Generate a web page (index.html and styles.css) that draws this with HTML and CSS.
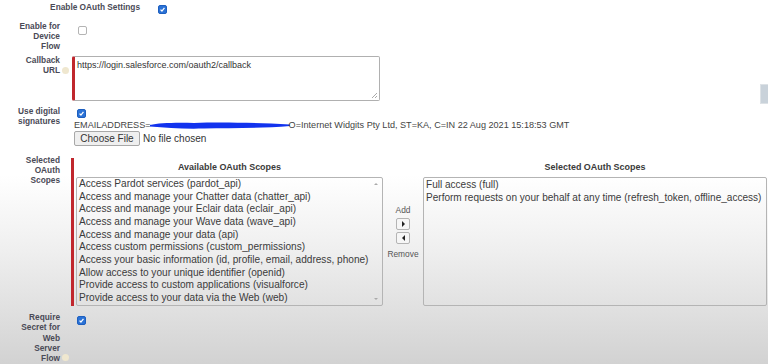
FILE: index.html
```html
<!DOCTYPE html>
<html>
<head>
<meta charset="utf-8">
<link rel="stylesheet" href="styles.css">
</head>
<body>
<div class="page">
  <div class="top-row">
    <div class="top-label">Enable OAuth Settings</div>
    <span class="cb on top-cb"><svg viewBox="0 0 10 10"><path d="M2.2 5.2 L4.2 7.2 L7.8 2.8" /></svg></span>
  </div>

  <div class="row row-device">
    <div class="lbl">Enable for<br>Device<br>Flow</div>
    <div class="help"></div>
    <div class="val"><span class="cb cb-device"></span></div>
  </div>

  <div class="row row-callback">
    <div class="lbl">Callback<br>URL</div>
    <div class="help"><span class="help-ic ic-callback"></span></div>
    <div class="val">
      <div class="url-box">https://login.salesforce.com/oauth2/callback<span class="grip"></span></div>
    </div>
  </div>

  <div class="row row-sig">
    <div class="lbl">Use digital<br>signatures</div>
    <div class="help"></div>
    <div class="val sig-val">
      <span class="cb on cb-sig"><svg viewBox="0 0 10 10"><path d="M2.2 5.2 L4.2 7.2 L7.8 2.8" /></svg></span>
      <div class="cert">EMAILADDRESS=<svg class="scribble" viewBox="0 0 142 10" width="142" height="10"><path d="M1 5 C10 3 25 2.5 45 3 C70 2 100 2.5 141 4.5 L141 6 C110 8.5 80 8 55 8.5 C35 9 18 8 1 6.5 Z" /></svg>O=Internet Widgits Pty Ltd, ST=KA, C=IN 22 Aug 2021 15:18:53 GMT</div>
      <div class="file-row"><span class="file-btn">Choose File</span><span class="file-none">No file chosen</span></div>
    </div>
  </div>

  <div class="row row-scopes">
    <div class="lbl">Selected<br>OAuth<br>Scopes</div>
    <div class="help"></div>
    <div class="val scopes-val">
      <div class="scope-col avail-col">
        <div class="scope-head">Available OAuth Scopes</div>
        <div class="scope-box avail-box">
          <div>Access Pardot services (pardot_api)</div>
          <div>Access and manage your Chatter data (chatter_api)</div>
          <div>Access and manage your Eclair data (eclair_api)</div>
          <div>Access and manage your Wave data (wave_api)</div>
          <div>Access and manage your data (api)</div>
          <div>Access custom permissions (custom_permissions)</div>
          <div>Access your basic information (id, profile, email, address, phone)</div>
          <div>Allow access to your unique identifier (openid)</div>
          <div>Provide access to custom applications (visualforce)</div>
          <div>Provide access to your data via the Web (web)</div>
          <span class="arr arr-up"></span><span class="arr arr-down"></span>
        </div>
      </div>
      <div class="mover">
        <div class="mv-lbl">Add</div>
        <span class="mv-btn"><span class="tri-r"></span></span>
        <span class="mv-btn"><span class="tri-l"></span></span>
        <div class="mv-lbl">Remove</div>
      </div>
      <div class="scope-col sel-col">
        <div class="scope-head">Selected OAuth Scopes</div>
        <div class="scope-box sel-box">
          <div>Full access (full)</div>
          <div>Perform requests on your behalf at any time (refresh_token, offline_access)</div>
        </div>
      </div>
    </div>
  </div>

  <div class="row row-secret">
    <div class="lbl">Require<br>Secret for<br>Web<br>Server<br>Flow</div>
    <div class="help"><span class="help-ic ic-secret"></span></div>
    <div class="val"><span class="cb on cb-secret"><svg viewBox="0 0 10 10"><path d="M2.2 5.2 L4.2 7.2 L7.8 2.8" /></svg></span></div>
  </div>

  <div class="side-tab"></div>
</div>
</body>
</html>
```

FILE: styles.css
```css
html, body {
  margin: 0;
  padding: 0;
}
body {
  width: 768px;
  height: 364px;
  overflow: hidden;
  font-family: "Liberation Sans", Arial, sans-serif;
  background: linear-gradient(to bottom, #ffffff 0px, #ffffff 175px, #efefef 250px, #e0e0e0 310px, #d2d2d2 364px);
  color: #333;
}
.page {
  position: relative;
  height: 364px;
}

/* checkboxes */
.cb {
  display: block;
  width: 9px;
  height: 9px;
  box-sizing: border-box;
  border: 1px solid #b4b4b4;
  border-radius: 2px;
  background: #fff;
}
.cb.on {
  background: #2b72d6;
  border-color: #1d5fbf;
}
.cb svg {
  display: block;
  width: 7px;
  height: 7px;
}
.cb svg path {
  fill: none;
  stroke: #fff;
  stroke-width: 1.8;
}

/* first row */
.top-row {
  display: flex;
  height: 20px;
}
.top-label {
  width: 140px;
  text-align: right;
  font-size: 8.3px;
  font-weight: bold;
  color: #4a4a56;
  line-height: 14px;
}
.top-cb {
  margin-left: 18px;
  margin-top: 5px;
}

/* rows */
.row {
  display: flex;
}
.lbl {
  width: 60px;
  flex: none;
  text-align: right;
  font-size: 8.3px;
  font-weight: bold;
  color: #4a4a56;
  line-height: 10px;
}
.help {
  width: 12px;
  flex: none;
}
.help-ic {
  display: block;
  width: 7px;
  height: 7px;
  border-radius: 50%;
  background: #efe7cf;
  margin-left: 2px;
}
.val {
  flex: none;
}

.row-device { height: 35px; }
.row-device .lbl { padding-top: 1px; }
.cb-device { margin-left: 6px; margin-top: 6px; }

.row-callback { height: 50px; }
.ic-callback { margin-top: 12px; }
.url-box {
  position: relative;
  margin-top: 1px;
  width: 308px;
  height: 45px;
  box-sizing: border-box;
  border: 1px solid #b0b0b0;
  border-left: 3px solid #c0272d;
  border-radius: 2px;
  font-size: 9px;
  color: #333;
  padding: 3px 0 0 2px;
  line-height: 10px;
}
.grip {
  position: absolute;
  right: 2px;
  bottom: 2px;
  width: 5px;
  height: 5px;
  background: linear-gradient(135deg, transparent 45%, #aaa 45%, #aaa 55%, transparent 55%, transparent 75%, #aaa 75%, #aaa 85%, transparent 85%);
}

.row-sig { height: 50px; }
.row-sig .lbl { padding-top: 1px; }
.sig-val { display: flex; flex-direction: column; }
.cb-sig { margin-left: 5px; margin-top: 4px; }
.cert {
  margin-left: 2px;
  margin-top: 2px;
  font-size: 9.1px;
  line-height: 10px;
  color: #444;
  white-space: nowrap;
  display: flex;
  align-items: center;
}
.scribble { display: block; margin: 0 -2px 0 -2px; }
.scribble path { fill: #1233ee; }
.file-row {
  display: flex;
  align-items: center;
  margin-left: 2px;
  margin-top: 1px;
}
.file-btn {
  width: 66px;
  height: 15px;
  box-sizing: border-box;
  border: 1px solid #a8a8a8;
  border-radius: 2px;
  background: #efefef;
  font-size: 10px;
  line-height: 13px;
  text-align: center;
  color: #333;
}
.file-none {
  margin-left: 3px;
  font-size: 10px;
  color: #333;
}

.row-scopes { height: 157px; }
.scopes-val {
  display: flex;
  margin-left: -1px;
  margin-top: 3px;
  height: 148px;
  border-left: 3px solid #c0272d;
  padding-left: 2px;
}
.scope-col { display: flex; flex-direction: column; }
.scope-head {
  margin-top: 4px;
  height: 15px;
  font-size: 8.95px;
  font-weight: bold;
  line-height: 10px;
  color: #3a3a3a;
  text-align: center;
}
.scope-box {
  position: relative;
  height: 129px;
  box-sizing: border-box;
  border: 1px solid #b4b4b4;
  border-radius: 2px;
  padding: 0 0 0 2px;
  font-size: 10.1px;
  line-height: 12.67px;
  color: #3b3b3b;
  white-space: nowrap;
}
.avail-box { width: 307px; }
.sel-box { width: 344px; line-height: 13px; font-size: 10.05px; }
.arr {
  position: absolute;
  right: 4px;
  width: 0;
  height: 0;
  border-left: 2px solid transparent;
  border-right: 2px solid transparent;
}
.arr-up { top: 5px; border-bottom: 2px solid #aaa; }
.arr-down { bottom: 5px; border-top: 2px solid #aaa; }

.mover {
  width: 40px;
  display: flex;
  flex-direction: column;
  align-items: center;
  padding-top: 47px;
}
.mv-lbl {
  font-size: 8.4px;
  line-height: 10px;
  color: #555;
}
.mv-btn {
  display: flex;
  align-items: center;
  justify-content: center;
  width: 14px;
  height: 12px;
  box-sizing: border-box;
  border: 1px solid #b4b4b4;
  border-radius: 2px;
  background: #f6f6f6;
  margin-top: 2px;
}
.mv-btn + .mv-lbl { margin-top: 5px; }
.mv-lbl + .mv-btn { margin-top: 3px; }
.tri-r {
  width: 0; height: 0;
  border-top: 3px solid transparent;
  border-bottom: 3px solid transparent;
  border-left: 3px solid #222;
}
.tri-l {
  width: 0; height: 0;
  border-top: 3px solid transparent;
  border-bottom: 3px solid transparent;
  border-right: 3px solid #222;
}

.row-secret .lbl { line-height: 10.3px; }
.ic-secret { margin-top: 42px; }
.cb-secret { margin-left: 5px; margin-top: 4px; }

/* right edge tab overlay */
.side-tab {
  position: absolute;
  left: 760px;
  top: 84px;
  width: 12px;
  height: 20px;
  box-sizing: border-box;
  border: 1px solid #dde2e6;
  background: #c9d2da;
}
```
